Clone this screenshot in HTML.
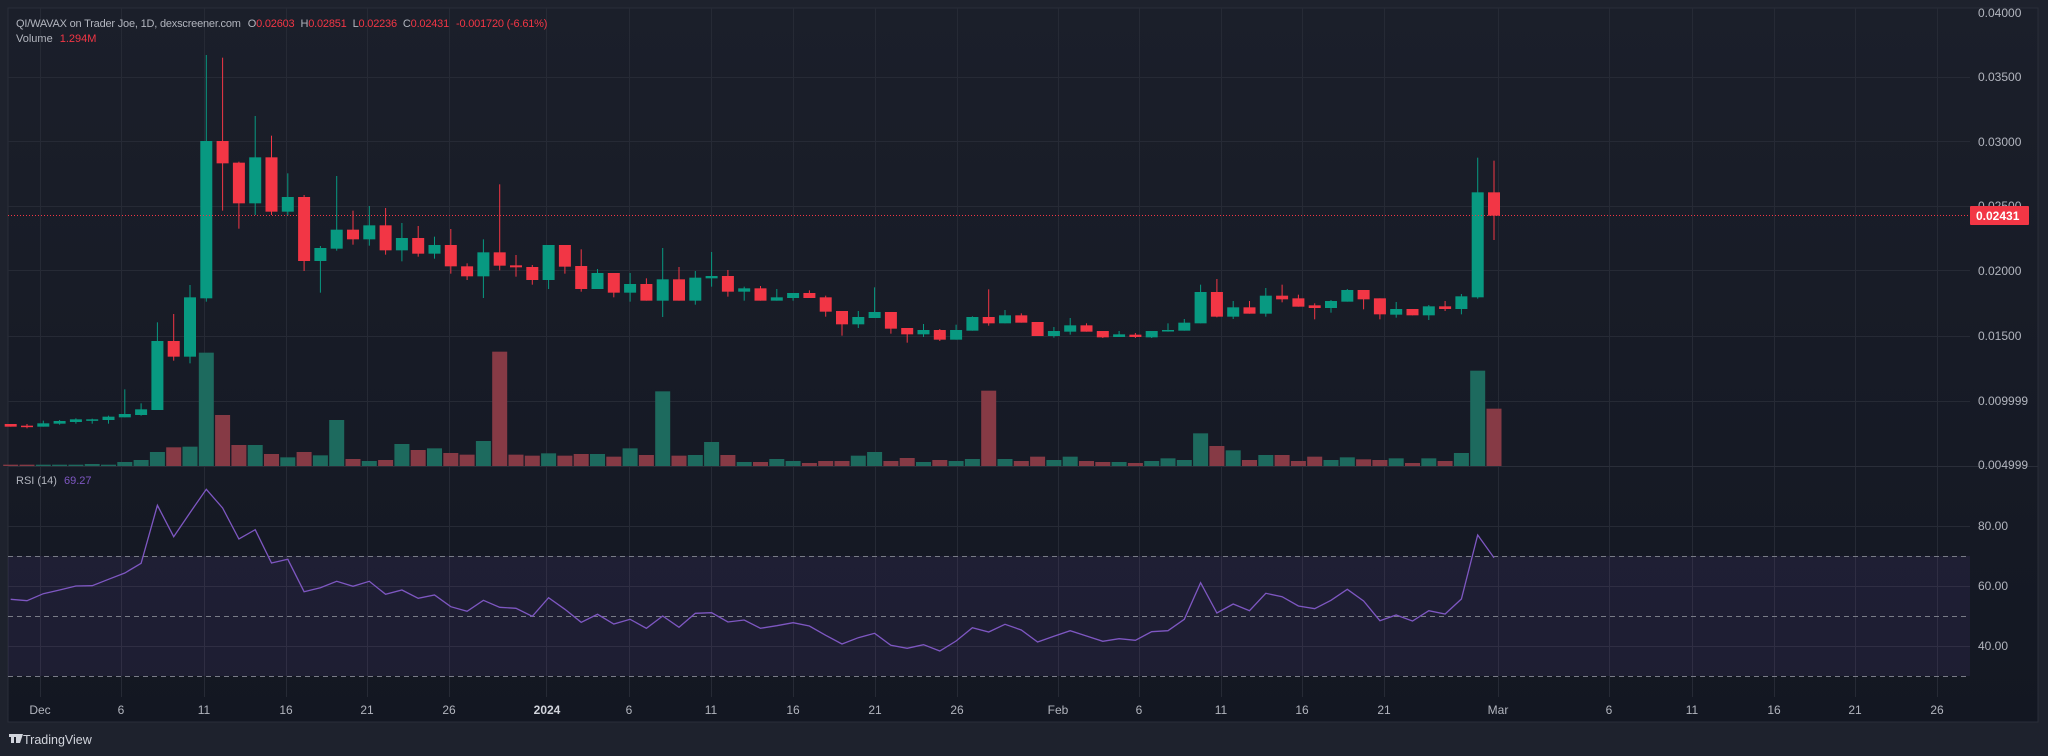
<!DOCTYPE html>
<html><head><meta charset="utf-8"><style>
html,body{margin:0;padding:0;background:#1e222d;width:2048px;height:756px;overflow:hidden}
svg{display:block}
text{font-family:"Liberation Sans",sans-serif}
</style></head><body>
<svg id="s" width="2048" height="756" xmlns="http://www.w3.org/2000/svg">
<defs><linearGradient id="bg" x1="0" y1="0" x2="0" y2="1"><stop offset="0" stop-color="#1b1f2a"/><stop offset="1" stop-color="#131722"/></linearGradient></defs>
<rect x="0" y="0" width="2048" height="756" fill="#1e222d"/>
<rect x="8" y="8" width="2030" height="714" fill="url(#bg)" stroke="#2a2e39" stroke-width="1"/>
<g id="grid" stroke="#262a35" stroke-width="1"></g>
<rect x="8" y="556" width="1962" height="120" fill="rgba(126,87,194,0.1)"/>
<g stroke="#787b86" stroke-width="1" stroke-dasharray="5,4">
<line x1="8" x2="1970" y1="556.5" y2="556.5"/><line x1="8" x2="1970" y1="616.5" y2="616.5"/><line x1="8" x2="1970" y1="676.5" y2="676.5"/></g>
<line x1="8" x2="2038" y1="466.5" y2="466.5" stroke="#2a2e39"/>
<g id="vol"></g><g id="cnd"></g>
<line x1="8" x2="1970" y1="215.5" y2="215.5" stroke="#f23645" stroke-width="1" stroke-dasharray="1,2"/>
<polyline id="rsi" fill="none" stroke="#7e57c2" stroke-width="1.3"/>
<g font-size="12" fill="#b2b5be">
<text x="1978" y="17">0.04000</text><text x="1978" y="81">0.03500</text><text x="1978" y="146">0.03000</text><text x="1978" y="210">0.02500</text><text x="1978" y="275">0.02000</text><text x="1978" y="340">0.01500</text><text x="1978" y="405">0.009999</text><text x="1978" y="469">0.004999</text>
<text x="1978" y="530">80.00</text><text x="1978" y="590">60.00</text><text x="1978" y="650">40.00</text>
</g>
<rect x="1970" y="206" width="59" height="19" rx="1" fill="#f23645"/>
<text x="1976" y="220" font-size="12" font-weight="bold" fill="#fff">0.02431</text>
<g font-size="12" fill="#b2b5be" text-anchor="middle">
<text x="40" y="714">Dec</text><text x="121" y="714">6</text><text x="204" y="714">11</text><text x="286" y="714">16</text><text x="367" y="714">21</text><text x="449" y="714">26</text><text x="547" y="714" font-weight="bold" fill="#d1d4dc">2024</text><text x="629" y="714">6</text><text x="711" y="714">11</text><text x="793" y="714">16</text><text x="875" y="714">21</text><text x="957" y="714">26</text><text x="1058" y="714">Feb</text><text x="1139" y="714">6</text><text x="1221" y="714">11</text><text x="1302" y="714">16</text><text x="1384" y="714">21</text><text x="1498" y="714">Mar</text><text x="1609" y="714">6</text><text x="1692" y="714">11</text><text x="1774" y="714">16</text><text x="1855" y="714">21</text><text x="1937" y="714">26</text>
</g>
<g font-size="11">
<text x="16" y="27" fill="#b2b5be" letter-spacing="-0.2">QI/WAVAX on Trader Joe, 1D, dexscreener.com<tspan dx="7">O</tspan><tspan fill="#f23645">0.02603</tspan><tspan dx="6">H</tspan><tspan fill="#f23645">0.02851</tspan><tspan dx="6">L</tspan><tspan fill="#f23645">0.02236</tspan><tspan dx="6">C</tspan><tspan fill="#f23645">0.02431</tspan><tspan dx="7" fill="#f23645">-0.001720 (-6.61%)</tspan></text>
<text x="16" y="42" fill="#b2b5be">Volume <tspan dx="4" fill="#f23645">1.294M</tspan></text>
<text x="16" y="484" fill="#b2b5be">RSI (14) <tspan dx="4" fill="#7e57c2">69.27</tspan></text>
</g>
<g fill="#d1d4dc"><path d="M9 734h7v3h-2v6h-3v-6h-2z M16 734h3l-1 9h-2z M19 734h4l-3 9h-3z"/>
<text x="23" y="744" font-size="12.5" fill="#d1d4dc">TradingView</text></g>
</svg>
<script>
var NS="http://www.w3.org/2000/svg";
function el(p,t,a){var e=document.createElementNS(NS,t);for(var k in a)e.setAttribute(k,a[k]);p.appendChild(e);return e;}
var g=document.getElementById('grid');
[77,141,206,270,336,401,526,586,646].forEach(function(y){el(g,'line',{x1:8,x2:1970,y1:y+.5,y2:y+.5});});
[40,121,204,286,367,449,546,629,711,793,875,957,1058,1139,1221,1302,1384,1498,1609,1692,1774,1855,1937].forEach(function(x){el(g,'line',{x1:x+.5,x2:x+.5,y1:8,y2:697});});
var C=[
"r 1152 1160 1152 1160","r 1157 1160 1152 1165","g 1150 1160 1142 1160","g 1143 1151 1140 1154","g 1138 1146 1135 1151","g 1138 1141 1136 1151","g 1130 1140 1127 1151","g 1122 1132 1048 1132","g 1108 1125 1090 1127","g 903 1110 847 1110","r 903 950 822 962","g 772 950 735 970","g 303 775 45 785","r 303 370 53 512","r 368 490 365 566","g 352 490 228 525","r 352 515 287 525","g 471 515 400 527","r 471 663 465 693","g 624 663 618 758","g 569 626 408 632","r 569 598 512 614","g 556 598 498 617","r 556 631 504 644","g 594 631 549 664","r 594 641 558 650","g 615 641 590 656","r 615 679 567 701","r 679 709 670 720","g 637 709 598 774","r 637 677 433 691","r 676 682 645 710","r 681 720 675 734",
"g 195 300 195 327","r 195 260 195 281","r 258 327 208 335","g 279 327 267 327","r 279 338 279 352","g 312 338 279 365","r 312 362 295 362","g 298 362 204 411","r 298 362 261 362","g 293 362 273 374","g 288 295 216 320","r 288 335 270 350","g 325 335 320 362","r 325 362 318 362","g 352 362 327 362","g 339 354 339 362","r 339 354 331 354","r 352 395 347 410","r 393 433 393 467","g 411 433 393 444","g 396 414 322 414","r 396 446 396 461","r 444 463 444 488","g 450 463 432 471","r 450 479 447 483","g 450 479 434 479","g 411 452 409 452","r 411 430 328 437","g 406 430 390 430","r 406 428 400 428","r 426 468 426 468","g 453 468 441 473","g 436 455 414 464",
"r 556 575 550 575","r 573 592 573 594","g 583 591 573 591","r 584 591 579 594","g 573 592 573 594","g 570 573 550 575","g 548 572 537 572","g 456 550 434 550","r 456 530 417 532","g 502 530 483 537","r 502 521 483 521","g 467 521 444 530","r 467 478 434 487","r 475 500 464 500","r 496 504 490 538","g 483 504 480 518","g 450 485 447 485","r 450 478 450 508","r 475 523 475 538","g 507 524 486 533","r 507 526 507 526","g 499 526 495 540","r 499 507 483 513","g 469 507 462 523","g 157 472 53 476","r 157 227 62 300"];
var V=[1274,1274,1274,1274,1274,1272,1274,1266,1260,1236,1222,1220,938,1125,1215,1215,1242,1252,1236,1246,1140,1257,1263,1260,1212,1230,1225,1239,1244,1203,935,1244,1247,
820,827,822,822,830,805,825,634,827,825,786,825,846,846,837,843,849,843,843,827,816,843,834,846,840,843,837,632,837,843,830,840,830,
963,966,966,969,963,955,960,880,918,931,960,945,945,963,950,960,952,958,960,955,969,955,963,939,692,806];
var R=[400,404,383,372,360,359,340,321,292,118,212,140,70,126,219,191,291,280,377,365,346,361,346,385,372,397,387,422,436,403,424,427,451,395,430,469,445,474,460,487,450,484,442,440,468,462,487,
479,470,480,508,534,515,502,538,547,536,555,525,485,498,475,492,528,511,494,510,526,518,523,497,494,460,350,441,414,434,382,392,420,428,403,370,405,464,447,465,434,444,399,207,275];
function off(i){return i<33?40:(i<66?180:140);}
var cg=document.getElementById('cnd'),vg=document.getElementById('vol');
C.forEach(function(s,i){var p=s.split(' '),o=off(i),x=10.7+16.3*i,col=p[0]=='g'?'#089981':'#f23645';
var bt=o+(+p[1])/3,bb=o+(+p[2])/3,wt=o+(+p[3])/3,wb=o+(+p[4])/3;
el(cg,'rect',{x:x-0.5,y:wt,width:1,height:Math.max(wb-wt,1),fill:col});
el(cg,'rect',{x:x-6,y:bt,width:12,height:Math.max(bb-bt,1.5),fill:col});
var vt=off(i)+V[i]/3;el(vg,'rect',{x:x-7.5,y:vt,width:15,height:Math.max(466-vt,1),fill:p[0]=='g'?'#1d6a5e':'#863a45'});});
var pts=R.map(function(z,i){return (10.7+16.3*i).toFixed(1)+','+(466+z/3).toFixed(1);}).join(' ');
document.getElementById('rsi').setAttribute('points',pts);
</script>
</body></html>
